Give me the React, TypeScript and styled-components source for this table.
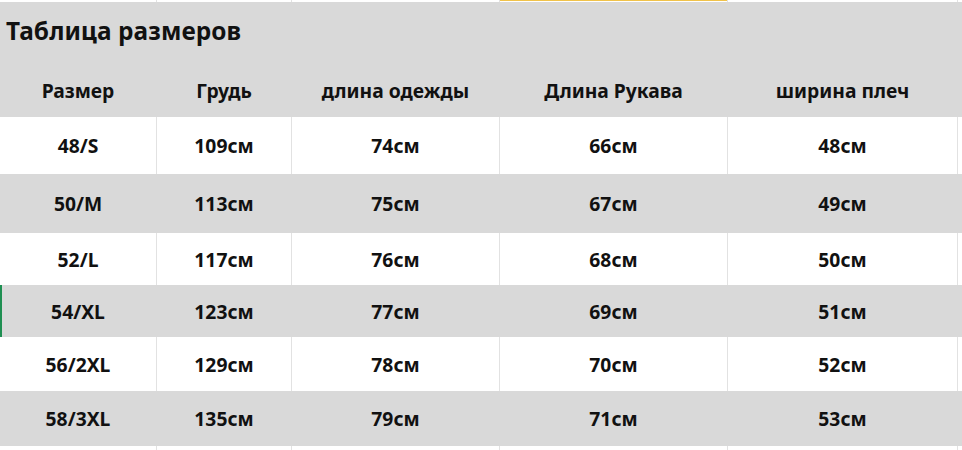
import styled, { createGlobalStyle } from 'styled-components';

const GlobalStyle = createGlobalStyle`
  html, body {
    margin: 0;
    padding: 0;
    background: #ffffff;
  }
  body {
    font-family: 'Noto Sans', 'Open Sans', sans-serif;
    color: #111111;
  }
`;

const COLUMNS = '157px 135px 208px 228px 230px';
const GRAY = '#d9d9d9';
const LINE = '#e2e2e2';

const Sheet = styled.div`
  width: 962px;
  height: 450px;
  overflow: hidden;
  background: #ffffff;
`;

const Strip = styled.div<{ $height: number }>`
  display: grid;
  grid-template-columns: ${COLUMNS};
  height: ${(p) => p.$height}px;
`;

const StripCell = styled.div<{ $accent?: boolean }>`
  border-right: 1px solid ${LINE};
  background: ${(p) => (p.$accent ? 'linear-gradient(#f0c24a 0 1px, #ffffff 1px)' : '#ffffff')};
`;

const TitleBar = styled.div`
  background: ${GRAY};
  height: 58px;
  padding-left: 6px;
  display: flex;
  align-items: center;
`;

const Title = styled.h1`
  margin: 0;
  font-size: 24.4px;
  font-weight: 700;
  line-height: 1;
  letter-spacing: 0.1px;
`;

const Row = styled.div<{ $height: number; $shaded?: boolean }>`
  display: grid;
  grid-template-columns: ${COLUMNS};
  height: ${(p) => p.$height}px;
  background: ${(p) => (p.$shaded ? GRAY : '#ffffff')};
`;

const Cell = styled.div<{ $shaded?: boolean; $marked?: boolean }>`
  display: flex;
  align-items: center;
  justify-content: center;
  font-size: 19.3px;
  font-weight: 700;
  border-right: 1px solid ${(p) => (p.$shaded ? GRAY : LINE)};
  box-shadow: ${(p) => (p.$marked ? 'inset 2px 0 0 #1f8f52' : 'none')};
`;

const HeadCell = styled(Cell)`
  padding-top: 3px;
`;

const headers = ['Размер', 'Грудь', 'длина одежды', 'Длина Рукава', 'ширина плеч'];

const rows: { values: string[]; height: number }[] = [
  { values: ['48/S', '109см', '74см', '66см', '48см'], height: 57 },
  { values: ['50/M', '113см', '75см', '67см', '49см'], height: 59 },
  { values: ['52/L', '117см', '76см', '68см', '50см'], height: 52 },
  { values: ['54/XL', '123см', '77см', '69см', '51см'], height: 52 },
  { values: ['56/2XL', '129см', '78см', '70см', '52см'], height: 54 },
  { values: ['58/3XL', '135см', '79см', '71см', '53см'], height: 55 },
];

const App = () => {
  return (
    <Sheet>
      <GlobalStyle />
      <Strip $height={2}>
        {headers.map((h, i) => (
          <StripCell key={h} $accent={i === 3} />
        ))}
      </Strip>
      <TitleBar>
        <Title>Таблица размеров</Title>
      </TitleBar>
      <Row $height={57} $shaded>
        {headers.map((h) => (
          <HeadCell key={h} $shaded>
            {h}
          </HeadCell>
        ))}
      </Row>
      {rows.map((row, r) => {
        const shaded = r % 2 === 1;
        return (
          <Row key={row.values[0]} $height={row.height} $shaded={shaded}>
            {row.values.map((v, c) => (
              <Cell key={c} $shaded={shaded} $marked={r === 3 && c === 0}>
                {v}
              </Cell>
            ))}
          </Row>
        );
      })}
      <Strip $height={4}>
        {headers.map((h) => (
          <StripCell key={h} />
        ))}
      </Strip>
    </Sheet>
  );
};

export default App;
